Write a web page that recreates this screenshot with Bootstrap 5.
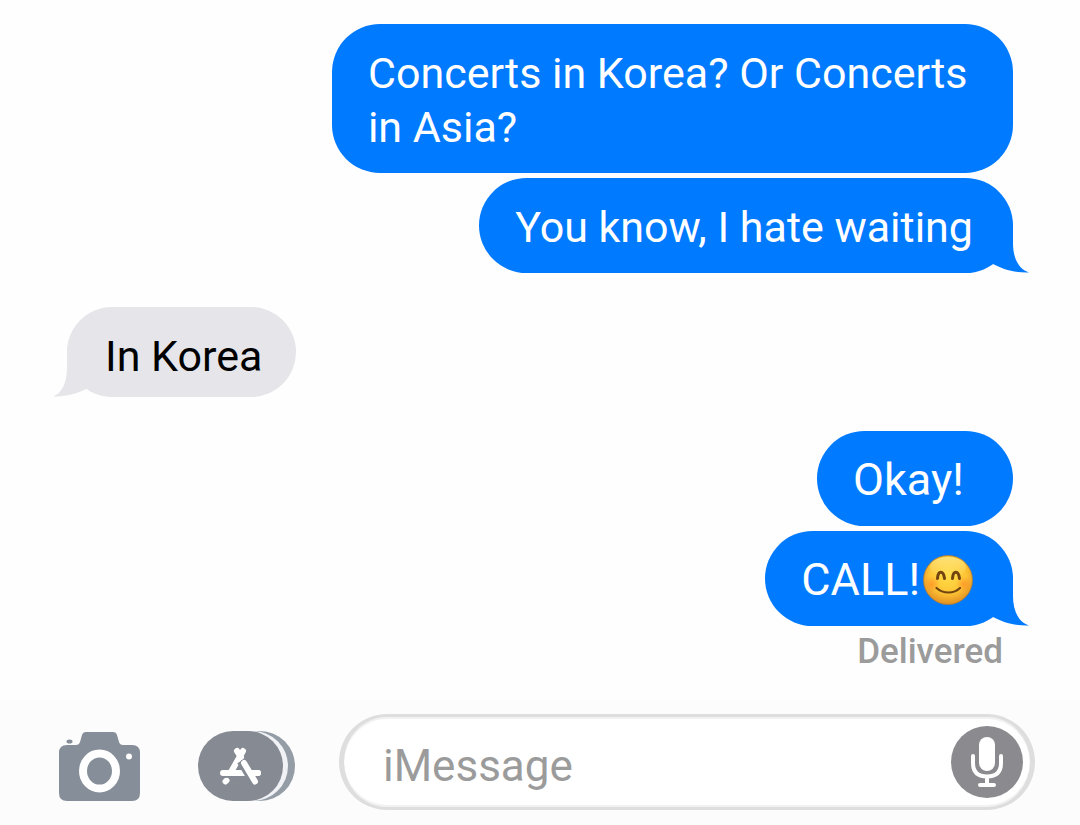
<!DOCTYPE html>
<html lang="en">
<head>
<meta charset="utf-8">
<meta name="viewport" content="width=device-width, initial-scale=1">
<title>Messages</title>
<link href="https://cdn.jsdelivr.net/npm/bootstrap@5.3.0/dist/css/bootstrap.min.css" rel="stylesheet">
<script src="https://cdn.jsdelivr.net/npm/bootstrap@5.3.0/dist/js/bootstrap.bundle.min.js" defer></script>
<style>
  body { font-family: Roboto, "Liberation Sans", sans-serif; background: #fefefe; }
  .thread { padding: 24px 67px 27px; gap: 34px; }
  .bubble { max-width: 72%; min-width: 196px; padding: 22px 40px 19px 36px; border-radius: 48px; font-size: 43px; line-height: 54px; }
  .brief { font-size: 45px; }
  .sent { background: #007aff; color: #fff; }
  .received { background: #e5e5ea; color: #000; padding: 22px 34px 14px 38px; }
  .group { gap: 5px; }
  .tail { position: absolute; bottom: 0; right: -17px; }
  .received .tail { right: auto; left: -15px; transform: scaleX(-1); }
  .emoji { width: 50px; height: 50px; margin-left: 3px; }
  .status { color: #9b9b9b; font-size: 35px; font-weight: 500; line-height: 42px; padding-right: 10px; }
  .composer { background: #fcfcfc; padding: 14px 45px 15px 59px; }
  .tool { padding: 7px 0 0; }
  .apps { margin-left: 58px; margin-right: 43px; }
  .entry { min-width: 0; border: solid #dedede; border-width: 3px 5px; border-radius: 48px; background: #fff; height: 96px; padding: 0 7px 0 39px; box-shadow: inset 0 2px #f2f2f2, inset 0 -2px #f2f2f2; }
  .entry input { color: #333; font-size: 44px; line-height: 54px; min-width: 0; padding: 7px 0 0; }
  .entry input::placeholder { color: #9b9b9b; opacity: 1; }
</style>
</head>
<body>
<main class="thread d-flex flex-column">
  <section class="group d-flex flex-column align-items-end">
    <div class="bubble sent">Concerts in Korea? Or Concerts in Asia?</div>
    <div class="bubble sent position-relative">You know, I hate waiting
      <svg class="tail" width="47" height="50" viewBox="0 0 47 50" aria-hidden="true"><path fill="#007aff" d="M30 0V20C30 34 35 46 46 49.500C32 50 19 46 10 41L0 30Z"/></svg>
    </div>
  </section>
  <section class="group d-flex flex-column align-items-start">
    <div class="bubble received position-relative">In Korea
      <svg class="tail" width="47" height="50" viewBox="0 0 47 50" aria-hidden="true"><path fill="#e5e5ea" d="M32 0V20C32 34 36 46 46 49.500C32 50 20 46 11 41L0 30Z"/></svg>
    </div>
  </section>
  <section class="group d-flex flex-column align-items-end">
    <div class="bubble brief sent">Okay!</div>
    <div class="bubble brief sent position-relative d-flex align-items-center"><span>CALL!</span><svg class="emoji" viewBox="0 0 50 50" role="img" aria-label="Smiling face">
        <defs>
          <radialGradient id="face" cx=".5" cy=".4" r=".62"><stop offset="0" stop-color="#ffdc48"/><stop offset=".6" stop-color="#fdc536"/><stop offset="1" stop-color="#e08a20"/></radialGradient>
          <linearGradient id="shine" x1="0" y1="0" x2="0" y2="1"><stop offset="0" stop-color="#fff3a0" stop-opacity=".6"/><stop offset="1" stop-color="#fff3a0" stop-opacity="0"/></linearGradient>
          <radialGradient id="cheek"><stop offset="0" stop-color="#ff761c" stop-opacity=".5"/><stop offset="1" stop-color="#ff7a20" stop-opacity="0"/></radialGradient>
        </defs>
        <circle cx="25" cy="25" r="24.500" fill="url(#face)" stroke="#a87b3a" stroke-width=".8"/>
        <ellipse cx="25" cy="12" rx="18" ry="10" fill="url(#shine)"/>
        <circle cx="9" cy="29" r="8" fill="url(#cheek)"/><circle cx="41" cy="29" r="8" fill="url(#cheek)"/>
        <g fill="none" stroke="#70430f" stroke-linecap="round"><path stroke-width="3" d="M14.500 23.500C15 15 20.500 15 21.500 23.500M29.500 23.500C30 15 35.500 15 36.500 23.500"/><path stroke-width="2.200" d="M13.500 33C20 39 31 39 37 33"/></g>
      </svg>
      <svg class="tail" width="47" height="50" viewBox="0 0 47 50" aria-hidden="true"><path fill="#007aff" d="M30 0V20C30 34 35 46 46 49.500C32 50 19 46 10 41L0 30Z"/></svg>
    </div>
    <div class="status">Delivered</div>
  </section>
</main>
<footer class="composer d-flex align-items-center">
  <button type="button" class="tool btn border-0 d-flex" aria-label="Camera">
    <svg width="81" height="70" viewBox="0 0 81 70"><path fill="#868e99" d="M8 14H17Q20 14 21 11L23 4Q24 1 27 1H54Q57 1 58 4L60 11Q61 14 64 14H73Q81 14 81 22V62Q81 70 73 70H8Q0 70 0 62V22Q0 14 8 14Z"/><ellipse cx="10.500" cy="10.500" rx="3" ry="2" fill="#868e99"/><ellipse cx="40.500" cy="40" rx="16.500" ry="17.500" fill="none" stroke="#fff" stroke-width="8"/><circle cx="70" cy="25.500" r="3" fill="#fff"/></svg>
  </button>
  <button type="button" class="tool apps btn border-0 d-flex" aria-label="Apps">
    <svg width="98" height="70" viewBox="0 0 98 70"><rect x="25" width="72" height="70" rx="35" fill="#949ca6"/><rect x="15" width="75" height="70" rx="35" fill="#f1f2f6"/><rect width="85" height="70" rx="35" fill="#868a93"/><g fill="none" stroke="#fff" stroke-width="6" stroke-linecap="round"><path d="M25 42H60M45 20L33 41M28.500 49.500L27.500 50.500"/></g><path d="M22 46H47" stroke="#868a93" stroke-width="1.600"/><path d="M43 30L56 52" stroke="#868a93" stroke-width="8.500"/><path d="M39 20L43 26M46 32L57 50.500M54 42H60" stroke="#fff" stroke-width="6" stroke-linecap="round"/></svg>
  </button>
  <div class="entry flex-grow-1 d-flex align-items-center">
    <input class="flex-grow-1 border-0 bg-transparent" type="text" placeholder="iMessage" aria-label="iMessage">
    <button type="button" class="btn p-0 border-0 d-flex" aria-label="Record audio">
      <svg width="72" height="72" viewBox="0 0 72 72"><circle cx="36" cy="36" r="36" fill="#8b8a8f"/><rect x="28" y="11" width="16" height="34" rx="8" fill="#fff"/><path d="M22 30V37Q22 50.500 36 50.500T50 37V30M36 51V58M29 59H43" fill="none" stroke="#fff" stroke-width="4" stroke-linecap="round"/></svg>
    </button>
  </div>
</footer>
</body>
</html>
